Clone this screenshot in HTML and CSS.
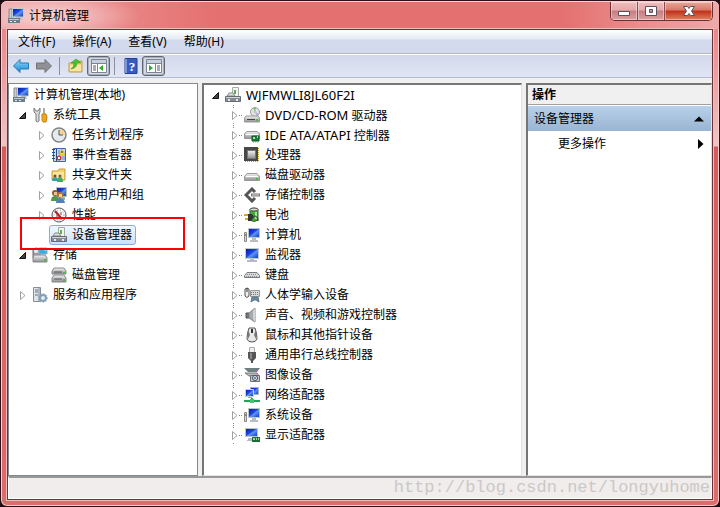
FILE: index.html
```html
<!DOCTYPE html>
<html lang="zh-CN">
<head>
    <meta charset="UTF-8">
    <meta name="viewport" content="width=device-width, initial-scale=1.0">
    <title>计算机管理</title>
    <link rel="stylesheet" href="styles.css">
</head>
<body>
    <!-- Shared icons -->
    <svg class="sprite" aria-hidden="true">
        <defs>
            <linearGradient id="screen" x1="0" y1="0" x2="1" y2="1">
                <stop offset="0" stop-color="#0818a0"/>
                <stop offset=".45" stop-color="#1c48dc"/>
                <stop offset=".55" stop-color="#5f96f4"/>
                <stop offset="1" stop-color="#1030c0"/>
            </linearGradient>
            <linearGradient id="metal" x1="0" y1="0" x2="0" y2="1">
                <stop offset="0" stop-color="#f4f4f4"/>
                <stop offset="1" stop-color="#8c8f92"/>
            </linearGradient>
            <linearGradient id="blue-arrow" x1="0" y1="0" x2="0" y2="1">
                <stop offset="0" stop-color="#8fdcfa"/>
                <stop offset="1" stop-color="#1487d4"/>
            </linearGradient>
        </defs>
        <symbol id="open" viewBox="0 0 9 9"><path d="M7.5 1.5v6h-6z" fill="#444" stroke="#111"/></symbol>
        <symbol id="closed" viewBox="0 0 9 9"><path d="M2.5 .5v8L7 4.5z" fill="#fff" stroke="#a0a0a0"/></symbol>
        <symbol id="management" viewBox="0 0 16 16">
            <path d="M1 1h3v10H1z" fill="#c8ccd0" stroke="#888"/>
            <path d="M4.5 .5h11v8.5h-11z" fill="url(#screen)" stroke="#c5cdd4"/>
            <path d="M8 9h5l1 3H8z" fill="#b9bec3"/>
            <path d="M0 10h12v5H0z" fill="#6b7d8a"/><path d="M1 11h10v1H1z" fill="#b9c8d2"/>
            <path d="M2 13h2v1H2zM6 13h2v1H6z" fill="#e6eef2"/>
        </symbol>
        <symbol id="tools" viewBox="0 0 16 16">
            <path d="M2 1v4l2 2v7q1 2 3 0V7l1-2V1L6 4H4z" fill="#d8dadc" stroke="#77797c"/>
            <path d="M11 1h2v7h-2z" fill="#aaa"/><path d="M10 7h4l1 3-1 5h-3l-1-2z" fill="#f2a61c" stroke="#c98212"/>
        </symbol>
        <symbol id="clock" viewBox="0 0 16 16">
            <circle cx="8" cy="8" r="7" fill="#e5eaf0" stroke="#858585" stroke-width="1.5"/>
            <path d="M8 2a6 6 0 0 1 6 6H8z" fill="#f5d491"/><path d="M8 3v5h4" fill="none" stroke="#555"/>
        </symbol>
        <symbol id="events" viewBox="0 0 16 16">
            <path d="M2.5 1.5h12v13h-12z" fill="#c8dcf2" stroke="#3868a8"/><path d="M1 2h3v1H1zM1 5h3v1H1zM1 8h3v1H1zM1 11h3v1H1zM5 2h1v12H5z" fill="#284c80"/>
            <path d="M7 4h2M7 6h2M11 10h3M11 12h3" stroke="#6088b8"/>
            <path d="M11 2l3 6H8z" fill="#ffdd22" stroke="#c09000" stroke-width=".5"/><path d="M10.5 4h1v2h-1z" fill="#222"/>
            <circle cx="8" cy="11" r="2.5" fill="#d92b2b"/><path d="M7 10l2 2m0-2l-2 2" stroke="#fff"/>
        </symbol>
        <symbol id="shared" viewBox="0 0 16 16">
            <path d="M1 4h6l1-2h6v11H1z" fill="#f6d36b" stroke="#c79f3c"/><path d="M2 5h11v7H2z" fill="#fbe59a"/>
            <circle cx="4" cy="9" r="1.5" fill="#6b4c2c"/><path d="M1 14q0-4 3-4t3 4z" fill="#37a0a8"/>
            <circle cx="9" cy="9" r="1.5" fill="#7b5a34"/><path d="M6 15q0-5 3-5t3 5z" fill="#48a860"/>
        </symbol>
        <symbol id="users" viewBox="0 0 16 16">
            <path d="M5.5 .5h10v9h-10z" fill="url(#screen)" stroke="#b8c0c8"/><path d="M11 10h3v3h-3z" fill="#aaa"/>
            <circle cx="4" cy="6" r="3" fill="#8a6030"/><path d="M3 5h3v3H3z" fill="#f0c090"/><path d="M0 14q0-5 4-5t4 5z" fill="#4c9a4c"/>
            <circle cx="9" cy="8" r="3" fill="#b07828"/><path d="M8 7h3v3H8z" fill="#f6d0a0"/><path d="M5 16q0-5 4-5t5 5z" fill="#5080c0"/>
        </symbol>
        <symbol id="performance" viewBox="0 0 16 16">
            <circle cx="8" cy="8" r="7" fill="#f8f8f8" stroke="#555"/><circle cx="8" cy="8" r="5" fill="none" stroke="#999" stroke-dasharray="1 2"/>
            <path d="M4 4l7 8" stroke="#c81818" stroke-width="2"/><path d="M6 11V6M10 5v3" fill="none" stroke="#844"/>
        </symbol>
        <symbol id="device" viewBox="0 0 16 16">
            <path d="M7.5 .5h6v10h-6z" fill="#f2f5f2" stroke="#a8aaaa"/><path d="M9 3h2v4H9z" fill="#5ab04a"/>
            <path d="M2 9l2-3h4l2 3z" fill="#ddd" stroke="#888"/>
            <path d="M.5 9.5h15v5H.5z" fill="#858b90" stroke="#666c70"/><path d="M1 10h14v1H1z" fill="#d2d6d8"/><path d="M3 12h2v2H3zM11 12h2v2h-2z" fill="#e8e8e8"/>
        </symbol>
        <symbol id="storage" viewBox="0 0 16 16">
            <path d="M1 2q3-2 7 0v9H1z" fill="#9da3a6" stroke="#666"/><circle cx="4" cy="4" r="2" fill="#eee"/>
            <path d="M7 1h8v6H7z" fill="#35b0dc" stroke="#9ab"/><path d="M8 2h6v2z" fill="#a8e5f8"/>
            <path d="M2 8h11l2 3v4H1v-4z" fill="url(#metal)" stroke="#888"/><path d="M12 12h2v2h-2z" fill="#44be36"/>
        </symbol>
        <symbol id="disks" viewBox="0 0 16 16">
            <path d="M3 1h10l2 3v3H1V4z" fill="url(#metal)" stroke="#888"/><path d="M3 8h10l2 3v4H1v-4z" fill="url(#metal)" stroke="#888"/>
            <path d="M3 5h8M3 12h8" stroke="#555"/><path d="M12 5h2v1h-2zM12 12h2v2h-2z" fill="#4b4"/>
        </symbol>
        <symbol id="services" viewBox="0 0 16 16">
            <path d="M1.5 .5h7v14h-7z" fill="#dfe4e8" stroke="#888e94"/><path d="M3 3h4M3 5h4M3 8h4" stroke="#637482"/><path d="M6 1h2v13H6z" fill="#aeb8c0"/>
            <circle cx="11" cy="11" r="3" fill="#e5edf3" stroke="#7f9fba" stroke-width="2"/><circle cx="11" cy="11" r="4.5" fill="none" stroke="#7f9fba" stroke-dasharray="1 2"/>
        </symbol>
        <symbol id="dvd" viewBox="0 0 16 16">
            <circle cx="11" cy="5" r="4.5" fill="#e2e4e8" stroke="#999"/><path d="M11 5l-2-4h3z" fill="#7bc66f"/><path d="M11 5l4 2-2 2z" fill="#b1a6da"/><circle cx="11" cy="5" r="1" fill="#fff" stroke="#888" stroke-width=".5"/>
            <path d="M2 9h12l1.5 2v4H.5v-4z" fill="url(#metal)" stroke="#999"/><path d="M3 12h8v1H3z" fill="#444"/><path d="M12 12h2v2h-2z" fill="#4dbd3c"/>
        </symbol>
        <symbol id="ide" viewBox="0 0 16 16">
            <path d="M3 4.5h10l2.5 2v5H.5v-5z" fill="url(#metal)" stroke="#999"/><path d="M2 7h12v1H2z" fill="#fff"/>
            <path d="M8 9h7v5H8z" fill="#16803c" stroke="#075620"/><path d="M9 10h2v2H9zM13 9h1v2h-1z" fill="#b6df9e"/><path d="M9 15h1M11 15h1M13 15h1" stroke="#b89820"/>
        </symbol>
        <symbol id="cpu" viewBox="0 0 16 16">
            <path d="M0 0h14v14H0z" fill="#484848"/><path d="M3.5 3.5h8v8h-8z" fill="url(#metal)" stroke="#777"/><path d="M14.5 1v13M1 14.5h13" stroke="#c69b28" stroke-dasharray="1 1"/>
        </symbol>
        <symbol id="disk" viewBox="0 0 16 16">
            <path d="M3 6.5h10l2.5 3v4H.5v-4z" fill="url(#metal)" stroke="#999"/><path d="M2 9h12v1H2z" fill="#fff"/><path d="M12 11h2v2h-2z" fill="#4bbd3e"/>
        </symbol>
        <symbol id="controller" viewBox="0 0 16 16">
            <path d="M11 5L8 2 2 8l6 6 3-3" fill="none" stroke="#555" stroke-width="3"/><path d="M7 8h9" stroke="#777" stroke-width="3"/><path d="M8 8h7" stroke="#ddd"/>
        </symbol>
        <symbol id="battery" viewBox="0 0 16 16">
            <path d="M6 2q4-2 8 0v11q-4 3-8 0z" fill="#46a83a" stroke="#39632f"/><ellipse cx="10" cy="2.5" rx="4" ry="1.5" fill="#ddd" stroke="#555"/><path d="M11 5h2v7h-2z" fill="#a6e890"/>
            <path d="M0 8h4M1 12h4" stroke="#d4a91c" stroke-width="2"/><path d="M4 7h4l2 3-3 4H4z" fill="#333"/><path d="M10 9q4 0 4 5" fill="none" stroke="#333" stroke-width="1"/>
        </symbol>
        <symbol id="computer" viewBox="0 0 16 16">
            <path d="M.5 5.5h2v9h-2z" fill="#d6dad8" stroke="#888"/><path d="M1 7h1v2H1z" fill="#45bd35"/>
            <path d="M4.5 1.5h11v9h-11z" fill="url(#screen)" stroke="#bec5cc"/><path d="M8 11h4v2h2v2H6v-2h2z" fill="#b8bec4"/>
        </symbol>
        <symbol id="monitor" viewBox="0 0 16 16">
            <path d="M1.5 1.5h13v10h-13z" fill="url(#screen)" stroke="#c5cbd2"/><path d="M6 12h4v1h3v2H3v-2h3z" fill="#b5bac0"/>
        </symbol>
        <symbol id="keyboard" viewBox="0 0 16 16">
            <path d="M3 5.5h10l2.5 3v2H.5v-2z" fill="#d8d8da" stroke="#777b80"/><path d="M3 7.5h10M2 9.5h12" stroke="#858990" stroke-dasharray="1 1"/>
        </symbol>
        <symbol id="hid" viewBox="0 0 16 16">
            <path d="M1 2q2-2 4 0v7q-2 3-4 0z" fill="#eee" stroke="#555"/><path d="M3 1v4" stroke="#333"/>
            <path d="M6.5 3.5h9v6h-9z" fill="#d8dadd" stroke="#999"/><path d="M7 5.5h8M7 7.5h8" stroke="#777" stroke-dasharray="1 1"/>
            <path d="M7 15l1-5h6l1 5-3-2h-2z" fill="#5e8fae" stroke="#66747f"/>
        </symbol>
        <symbol id="sound" viewBox="0 0 16 16">
            <path d="M2 6h3v5H2z" fill="#777" stroke="#555"/><path d="M5 6l6-5v14l-6-4z" fill="#a5aaae" stroke="#888"/><path d="M9 4l2-3v14l-2-3z" fill="#d0d3d5"/>
        </symbol>
        <symbol id="mouse" viewBox="0 0 16 16">
            <path d="M5 1h6q2 5 2 11-1 3-5 3t-5-3Q3 6 5 1z" fill="#e7e8e9" stroke="#555"/><path d="M4 2l2 6-2 4zM12 2l-2 6 2 4z" fill="#777"/><path d="M8 2v4" stroke="#333" stroke-width="2"/>
        </symbol>
        <symbol id="usb" viewBox="0 0 16 16">
            <path d="M5.5 .5h5v5h-5z" fill="#eee" stroke="#aaa"/><path d="M4 5h8v6l-3 3v2H7v-2l-3-3z" fill="#555"/><path d="M6 6h2v6H6z" fill="#888"/>
        </symbol>
        <symbol id="imaging" viewBox="0 0 16 16">
            <path d="M0 1h16l-3 4H4z" fill="#6c8080"/><path d="M1 6h12l2 3H5z" fill="#bbb" stroke="#777"/><path d="M6.5 8.5h9v6h-9z" fill="#c4c8ca" stroke="#6c7072"/><circle cx="11" cy="11" r="2.5" fill="#e8eff3" stroke="#445"/><circle cx="11" cy="11" r="1" fill="#2b70a0"/>
        </symbol>
        <symbol id="network" viewBox="0 0 16 16">
            <path d="M6.5 .5h8v7h-8z" fill="url(#screen)" stroke="#aab4be"/><path d="M1.5 2.5h8v7h-8z" fill="url(#screen)" stroke="#c8d0d8"/><path d="M4 10h4v1H4z" fill="#aaa"/>
            <path d="M0 14h16M8 11v4" stroke="#22a355" stroke-width="2"/><path d="M6 12h4v4H6z" fill="#45c574"/>
        </symbol>
        <symbol id="display" viewBox="0 0 16 16">
            <path d="M1.5 1.5h12v8h-12z" fill="url(#screen)" stroke="#bdc4cb"/><path d="M4 11h6v3H3v-1h1z" fill="#b5bac0"/>
            <path d="M8 10h8v5H8z" fill="#17703a"/><path d="M9 11h2v2H9zM12 11h1v2h-1zM14 11h1v2h-1z" fill="#a6d79a"/>
        </symbol>
    </svg>

    <div class="window">
        <header class="titlebar">
            <svg class="icon"><use href="#management"/></svg>
            <h1>计算机管理</h1>
            <div class="window-buttons">
                <button aria-label="最小化"><svg width="14" height="14" viewBox="0 0 14 14"><path d="M1.5 7.5h11v4h-11z" fill="#fff" stroke="#54535f"/></svg></button>
                <button aria-label="最大化"><svg width="14" height="14" viewBox="0 0 14 14"><path d="M1.5 2.5h11v9h-11zM5.5 5.5v3h3v-3z" fill="#fff" fill-rule="evenodd" stroke="#54535f"/></svg></button>
                <button class="close" aria-label="关闭"><svg width="14" height="14" viewBox="0 0 14 14"><path d="M1.5 2.5h4L7 4.5l1.5-2h4L9.5 7l3 4.5h-4L7 9.5l-1.5 2h-4l3-4.5z" fill="#fff" stroke="#54535f"/></svg></button>
            </div>
        </header>

        <main class="client">
            <nav class="menubar">
                <button>文件(F)</button>
                <button>操作(A)</button>
                <button>查看(V)</button>
                <button>帮助(H)</button>
            </nav>

            <div class="toolbar">
                <button aria-label="后退"><svg class="icon" viewBox="0 0 16 16"><path d="M.5 8L7 1.5V5h8.5v6H7v3.5z" fill="url(#blue-arrow)" stroke="#2879ad"/></svg></button>
                <button aria-label="前进"><svg class="icon" viewBox="0 0 16 16"><path d="M15.5 8L9 1.5V5H.5v6H9v3.5z" fill="#8f9194" stroke="#707276"/></svg></button>
                <span class="separator"></span>
                <button aria-label="向上"><svg class="icon" viewBox="0 0 16 16"><path d="M1 5h5l1-2h7v11H1z" fill="#f4d479" stroke="#c59d46"/><path d="M2 7h11v6H2z" fill="#fae6a4"/><path d="M3 11q3-2 3-6H3l5-4 5 4H9q0 5-6 6z" fill="#4ac22d" stroke="#278b18" stroke-width=".5"/></svg></button>
                <button class="pressed" aria-label="显示/隐藏控制台树"><svg class="icon" viewBox="0 0 16 16"><path d="M.5 1.5h15v13H.5z" fill="#fff" stroke="#7b8492"/><path d="M1 2h14v3H1z" fill="#c5cfdf"/><path d="M1 5.5h14M6.5 6v8" stroke="#7b8492"/><path d="M2 8h3M2 10h3M2 12h3" stroke="#557"/><path d="M12 7v6L8 10z" fill="#32a829"/></svg></button>
                <span class="separator"></span>
                <button aria-label="帮助"><svg class="icon help" viewBox="0 0 16 16"><path d="M2 .5h12v15H2z" fill="#365cc0" stroke="#24408d"/><path d="M2 1h2v14H2z" fill="#7898dc"/><text x="9" y="13">?</text></svg></button>
                <button class="pressed" aria-label="显示/隐藏操作窗格"><svg class="icon" viewBox="0 0 16 16"><path d="M.5 1.5h15v13H.5z" fill="#fff" stroke="#7b8492"/><path d="M1 2h14v3H1z" fill="#c5cfdf"/><path d="M1 5.5h14M9.5 6v8" stroke="#7b8492"/><path d="M11 8h3M11 10h3M11 12h3" stroke="#557"/><path d="M3 7v6l4-3z" fill="#32a829"/></svg></button>
            </div>

            <div class="panes">
                <section class="pane console">
                    <ul class="tree">
                        <li class="root"><a href="#" class="item"><svg class="icon"><use href="#management"/></svg>计算机管理(本地)</a></li>
                        <li>
                            <div class="row"><button class="toggle" aria-label="折叠"><svg><use href="#open"/></svg></button><a href="#" class="item"><svg class="icon"><use href="#tools"/></svg>系统工具</a></div>
                            <ul>
                                <li class="row"><button class="toggle" aria-label="展开"><svg><use href="#closed"/></svg></button><a href="#" class="item"><svg class="icon"><use href="#clock"/></svg>任务计划程序</a></li>
                                <li class="row"><button class="toggle" aria-label="展开"><svg><use href="#closed"/></svg></button><a href="#" class="item"><svg class="icon"><use href="#events"/></svg>事件查看器</a></li>
                                <li class="row"><button class="toggle" aria-label="展开"><svg><use href="#closed"/></svg></button><a href="#" class="item"><svg class="icon"><use href="#shared"/></svg>共享文件夹</a></li>
                                <li class="row"><button class="toggle" aria-label="展开"><svg><use href="#closed"/></svg></button><a href="#" class="item"><svg class="icon"><use href="#users"/></svg>本地用户和组</a></li>
                                <li class="row"><button class="toggle" aria-label="展开"><svg><use href="#closed"/></svg></button><a href="#" class="item"><svg class="icon"><use href="#performance"/></svg>性能</a></li>
                                <li class="row leaf marked"><a href="#" class="item selected"><svg class="icon"><use href="#device"/></svg>设备管理器</a></li>
                            </ul>
                        </li>
                        <li>
                            <div class="row"><button class="toggle" aria-label="折叠"><svg><use href="#open"/></svg></button><a href="#" class="item"><svg class="icon"><use href="#storage"/></svg>存储</a></div>
                            <ul>
                                <li class="row leaf"><a href="#" class="item"><svg class="icon"><use href="#disks"/></svg>磁盘管理</a></li>
                            </ul>
                        </li>
                        <li>
                            <div class="row"><button class="toggle" aria-label="展开"><svg><use href="#closed"/></svg></button><a href="#" class="item"><svg class="icon"><use href="#services"/></svg>服务和应用程序</a></div>
                        </li>
                    </ul>
                </section>

                <section class="pane devices">
                    <div class="row"><button class="toggle" aria-label="折叠"><svg><use href="#open"/></svg></button><a href="#" class="item"><svg class="icon"><use href="#device"/></svg><span class="latin">WJFMWLI8JL60F2I</span></a></div>
                    <ul class="device-list">
                        <li class="row"><button class="toggle" aria-label="展开"><svg><use href="#closed"/></svg></button><a href="#" class="item"><svg class="icon"><use href="#dvd"/></svg><span><span class="latin">DVD/CD-ROM</span> 驱动器</span></a></li>
                        <li class="row"><button class="toggle" aria-label="展开"><svg><use href="#closed"/></svg></button><a href="#" class="item"><svg class="icon"><use href="#ide"/></svg><span><span class="latin">IDE ATA/ATAPI</span> 控制器</span></a></li>
                        <li class="row"><button class="toggle" aria-label="展开"><svg><use href="#closed"/></svg></button><a href="#" class="item"><svg class="icon"><use href="#cpu"/></svg>处理器</a></li>
                        <li class="row"><button class="toggle" aria-label="展开"><svg><use href="#closed"/></svg></button><a href="#" class="item"><svg class="icon"><use href="#disk"/></svg>磁盘驱动器</a></li>
                        <li class="row"><button class="toggle" aria-label="展开"><svg><use href="#closed"/></svg></button><a href="#" class="item"><svg class="icon"><use href="#controller"/></svg>存储控制器</a></li>
                        <li class="row"><button class="toggle" aria-label="展开"><svg><use href="#closed"/></svg></button><a href="#" class="item"><svg class="icon"><use href="#battery"/></svg>电池</a></li>
                        <li class="row"><button class="toggle" aria-label="展开"><svg><use href="#closed"/></svg></button><a href="#" class="item"><svg class="icon"><use href="#computer"/></svg>计算机</a></li>
                        <li class="row"><button class="toggle" aria-label="展开"><svg><use href="#closed"/></svg></button><a href="#" class="item"><svg class="icon"><use href="#monitor"/></svg>监视器</a></li>
                        <li class="row"><button class="toggle" aria-label="展开"><svg><use href="#closed"/></svg></button><a href="#" class="item"><svg class="icon"><use href="#keyboard"/></svg>键盘</a></li>
                        <li class="row"><button class="toggle" aria-label="展开"><svg><use href="#closed"/></svg></button><a href="#" class="item"><svg class="icon"><use href="#hid"/></svg>人体学输入设备</a></li>
                        <li class="row"><button class="toggle" aria-label="展开"><svg><use href="#closed"/></svg></button><a href="#" class="item"><svg class="icon"><use href="#sound"/></svg>声音、视频和游戏控制器</a></li>
                        <li class="row"><button class="toggle" aria-label="展开"><svg><use href="#closed"/></svg></button><a href="#" class="item"><svg class="icon"><use href="#mouse"/></svg>鼠标和其他指针设备</a></li>
                        <li class="row"><button class="toggle" aria-label="展开"><svg><use href="#closed"/></svg></button><a href="#" class="item"><svg class="icon"><use href="#usb"/></svg>通用串行总线控制器</a></li>
                        <li class="row"><button class="toggle" aria-label="展开"><svg><use href="#closed"/></svg></button><a href="#" class="item"><svg class="icon"><use href="#imaging"/></svg>图像设备</a></li>
                        <li class="row"><button class="toggle" aria-label="展开"><svg><use href="#closed"/></svg></button><a href="#" class="item"><svg class="icon"><use href="#network"/></svg>网络适配器</a></li>
                        <li class="row"><button class="toggle" aria-label="展开"><svg><use href="#closed"/></svg></button><a href="#" class="item"><svg class="icon"><use href="#computer"/></svg>系统设备</a></li>
                        <li class="row"><button class="toggle" aria-label="展开"><svg><use href="#closed"/></svg></button><a href="#" class="item"><svg class="icon"><use href="#display"/></svg>显示适配器</a></li>
                    </ul>
                </section>

                <aside class="pane actions">
                    <h2>操作</h2>
                    <button class="group">设备管理器<svg width="10" height="6" viewBox="0 0 10 6"><path d="M0 5.5h10L5 .5z"/></svg></button>
                    <button class="more">更多操作<svg width="6" height="10" viewBox="0 0 6 10"><path d="M0 0v10l5.5-5z"/></svg></button>
                </aside>
            </div>

            <footer class="statusbar">
                <span>http://blog.csdn.net/longyuhome</span>
            </footer>
        </main>
    </div>
</body>
</html>
```
FILE: styles.css
```css
*,
*::after {
    box-sizing: border-box;
}
body {
    margin: 0;
    background-color: #1c1015;
    font-family: "Noto Sans", "Noto Sans CJK SC", sans-serif;
    font-size: 12px;
    line-height: 20px;
    color: #000;
}
button {
    padding: 0;
    border: none;
    background: none;
    font: inherit;
    color: inherit;
}
a {
    color: inherit;
    text-decoration: none;
}
ul {
    margin: 0;
    padding: 0;
    list-style: none;
}
svg {
    display: block;
    flex: none;
}
.sprite {
    position: absolute;
    width: 0;
    height: 0;
}
.icon {
    width: 16px;
    height: 16px;
}
.latin {
    font-size: 13px;
}

/* Window frame */
.window {
    display: flex;
    flex-direction: column;
    min-height: 100vh;
    padding: 0 6px 6px;
    border: 1px solid #301018;
    border-radius: 7px;
    background: linear-gradient(#e87878 0, #f0c4c4 145px, #d45c5c 146px, #de6c6c 100%);
    box-shadow: inset 0 0 0 1px #f8d0d0;
}
.titlebar {
    display: flex;
    align-items: center;
    gap: 5px;
    height: 28px;
    margin: 0 -6px;
    padding: 0 6px 0 7px;
    border-top: 1px solid #f8d0d0;
    border-radius: 6px 6px 0 0;
    background:
        radial-gradient(ellipse 90px 24px at 50px 14px, rgba(255, 255, 255, 0.6), transparent),
        linear-gradient(90deg, #eda0a0 0, #e57070 30%, #e57070 78%, #eeaaaa 100%);
}
.titlebar h1 {
    flex: 1;
    margin: 0;
    font-size: 12px;
    font-weight: normal;
}
.window-buttons {
    display: flex;
    align-self: flex-start;
    border: 1px solid #6a3038;
    border-top: none;
    border-radius: 0 0 5px 5px;
    overflow: hidden;
}
.window-buttons button {
    display: flex;
    align-items: center;
    justify-content: center;
    width: 27px;
    height: 18px;
    border-right: 1px solid #8a4a50;
    background: linear-gradient(#efbdbd 0, #e5a8a8 45%, #c97c80 50%, #dba0a0 100%);
    box-shadow: inset 0 0 0 1px rgba(255, 255, 255, 0.4);
}
.window-buttons .close {
    width: 47px;
    border-right: none;
    background: linear-gradient(#e8a898 0, #d87868 45%, #c03018 50%, #e08060 100%);
}

/* Menu and toolbar */
.client {
    display: flex;
    flex: 1;
    flex-direction: column;
    border: 1px solid #6c3038;
    background-color: #f0f0f0;
    box-shadow: 0 0 0 1px #f2bcbc;
}
.menubar {
    display: flex;
    gap: 17px;
    height: 24px;
    padding: 0 10px;
    border-bottom: 1px solid #b4b8c4;
    background: linear-gradient(#fff 0, #e4ebf5 9px, #d4daed 10px, #d4daed 100%);
}
.toolbar {
    display: flex;
    align-items: center;
    height: 24px;
    padding: 0 1px;
    border-top: 1px solid #fff;
    border-bottom: 1px solid #b4bdd0;
    background: linear-gradient(#d3d9ec, #e0e6f4);
}
.toolbar button {
    display: flex;
    align-items: center;
    justify-content: center;
    width: 23px;
    height: 20px;
}
.toolbar .pressed {
    border: 1px solid #62666e;
    border-radius: 3px;
    background-color: #d4d9e4;
    box-shadow: inset 0 0 0 1px #a9aebb;
}
.separator {
    width: 1px;
    height: 18px;
    margin: 0 4px;
    background-color: #8c909a;
}
.help text {
    font: bold 13px "Liberation Serif", serif;
    text-anchor: middle;
    fill: #fff;
}

/* Panes */
.panes {
    display: grid;
    flex: 1;
    grid-template-columns: 190fr 320fr 186fr;
    gap: 4px;
    padding-top: 5px;
}
.pane {
    background-color: #fff;
}
.console {
    padding-top: 1px;
    border: 1px solid #828790;
}
.devices,
.actions {
    border: 1px solid #e3e3e3;
    border-top: 2px solid #767676;
    border-left: 2px solid #767676;
}
.root {
    padding-left: 2px;
}
.tree > li > .row {
    padding-left: 9px;
}
.tree ul {
    padding-left: 28px;
}
.row {
    display: flex;
    height: 20px;
}
.item {
    display: flex;
    align-items: center;
    gap: 5px;
    height: 20px;
    padding: 0 3px 0 1px;
    border: 1px solid transparent;
    border-radius: 3px;
    white-space: nowrap;
}
.toggle {
    display: flex;
    align-items: center;
    width: 12px;
    height: 20px;
}
.toggle svg {
    width: 9px;
    height: 9px;
}
.leaf {
    padding-left: 12px;
}
.selected {
    border-color: #84acdd;
    background: linear-gradient(#f2f7fd, #cfe1f8);
}
.marked {
    position: relative;
}
.marked::after {
    content: "";
    position: absolute;
    top: -8px;
    left: -17px;
    width: 165px;
    height: 33px;
    border: 2px solid #f00;
}
.devices > .row {
    padding-left: 7px;
}
.device-list {
    margin-left: 26px;
    background: repeating-linear-gradient(#888 0, #888 1px, transparent 1px, transparent 2px) 3px 0 / 1px 100% no-repeat;
}
.device-list .row {
    align-items: center;
}
.device-list .toggle {
    height: 14px;
    background-color: #fff;
}
.device-list .toggle::after {
    content: "";
    width: 3px;
    border-top: 1px dotted #888;
}
.actions h2 {
    margin: 0;
    padding: 0 4px;
    border-bottom: 1px solid #a0a0a0;
    background-color: #f0f0f0;
    font-size: 12px;
    line-height: 19px;
}
.actions button {
    display: flex;
    align-items: center;
    justify-content: space-between;
    width: 100%;
    height: 25px;
    padding: 0 7px 0 6px;
}
.actions .group {
    margin-top: 1px;
    background: linear-gradient(#b9d1ea, #99b4d1);
}
.actions .more {
    padding-left: 30px;
}

/* Status bar */
.statusbar {
    height: 23px;
    padding-right: 1px;
    border: 1px solid #fff;
    border-top: 2px solid #999;
    background-color: #f0edec;
    color: #cbc8c6;
    font-family: "Liberation Mono", monospace;
    font-size: 17px;
    line-height: 20px;
    text-align: right;
}
```
